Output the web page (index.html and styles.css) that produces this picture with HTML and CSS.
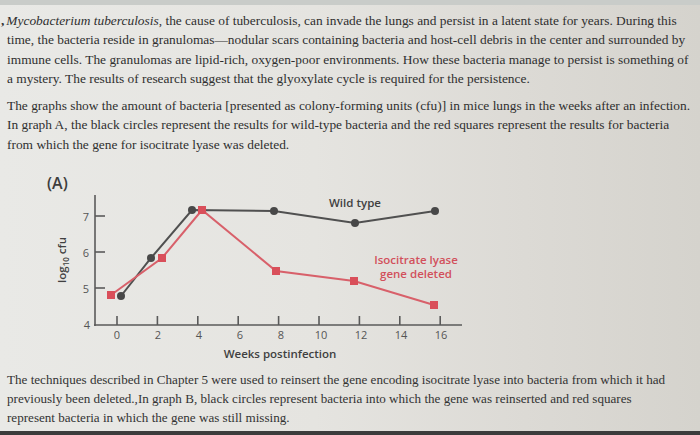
FILE: index.html
```html
<!DOCTYPE html>
<html>
<head>
<meta charset="utf-8">
<link rel="stylesheet" href="styles.css">
</head>
<body>
<div class="topbar"></div>
<main class="page">
  <p class="para intro">
    <span class="ln"><span class="blob">,</span><i>Mycobacterium tuberculosis</i>, the cause of tuberculosis, can invade the lungs and persist in a latent state for years. During this</span>
    <span class="ln">time, the bacteria reside in granulomas—nodular scars containing bacteria and host-cell debris in the center and surrounded by</span>
    <span class="ln">immune cells. The granulomas are lipid-rich, oxygen-poor environments. How these bacteria manage to persist is something of</span>
    <span class="ln">a mystery. The results of research suggest that the glyoxylate cycle is required for the persistence.</span>
  </p>
  <p class="para graphs">
    <span class="ln">The graphs show the amount of bacteria [presented as colony-forming units (cfu)] in mice lungs in the weeks after an infection.</span>
    <span class="ln">In graph A, the black circles represent the results for wild-type bacteria and the red squares represent the results for bacteria</span>
    <span class="ln">from which the gene for isocitrate lyase was deleted.</span>
  </p>
  <svg class="chart" width="700" height="216" viewBox="0 0 700 216">
    <text class="panel" x="47" y="35">(A)</text>
    <g class="axis">
      <line x1="95" y1="41" x2="95" y2="172"/>
      <line x1="94" y1="171" x2="462" y2="171"/>
      <line x1="95" y1="62" x2="105" y2="62"/>
      <line x1="95" y1="98" x2="105" y2="98"/>
      <line x1="95" y1="134" x2="105" y2="134"/>
      <line x1="117" y1="162" x2="117" y2="171"/>
      <line x1="157.4" y1="162" x2="157.4" y2="171"/>
      <line x1="197.8" y1="162" x2="197.8" y2="171"/>
      <line x1="238.2" y1="162" x2="238.2" y2="171"/>
      <line x1="278.6" y1="162" x2="278.6" y2="171"/>
      <line x1="319" y1="162" x2="319" y2="171"/>
      <line x1="359.4" y1="162" x2="359.4" y2="171"/>
      <line x1="399.8" y1="162" x2="399.8" y2="171"/>
      <line x1="440.2" y1="162" x2="440.2" y2="171"/>
    </g>
    <g class="ticklbl">
      <text x="86" y="67" text-anchor="middle">7</text>
      <text x="86" y="103" text-anchor="middle">6</text>
      <text x="86" y="139" text-anchor="middle">5</text>
      <text x="87" y="175" text-anchor="middle">4</text>
      <text x="117" y="185" text-anchor="middle">0</text>
      <text x="158" y="185" text-anchor="middle">2</text>
      <text x="199" y="185" text-anchor="middle">4</text>
      <text x="240" y="185" text-anchor="middle">6</text>
      <text x="281" y="185" text-anchor="middle">8</text>
      <text x="321" y="185" text-anchor="middle">10</text>
      <text x="361" y="185" text-anchor="middle">12</text>
      <text x="401" y="185" text-anchor="middle">14</text>
      <text x="441" y="185" text-anchor="middle">16</text>
    </g>
    <text class="axlbl" x="280" y="204" text-anchor="middle">Weeks postinfection</text>
    <text class="axlbl" transform="translate(66 106) rotate(-90)" text-anchor="middle">log<tspan class="sub" dy="3">10</tspan><tspan dy="-3"> cfu</tspan></text>
    <polyline class="wt" points="121,142 151,104 192,56 274,57 355,69 435,57"/>
    <polyline class="ko" points="111,141 162,104 202,56 276,117 354,127 434,151"/>
    <g class="dots">
      <circle cx="121" cy="142" r="4"/>
      <circle cx="151" cy="104" r="4"/>
      <circle cx="192" cy="56" r="4"/>
      <circle cx="274" cy="57" r="4"/>
      <circle cx="355" cy="69" r="4"/>
      <circle cx="435" cy="57" r="4"/>
    </g>
    <g class="sqs">
      <rect x="107" y="137" width="8" height="8"/>
      <rect x="158" y="100" width="8" height="8"/>
      <rect x="198" y="52" width="8" height="8"/>
      <rect x="272" y="113" width="8" height="8"/>
      <rect x="350" y="123" width="8" height="8"/>
      <rect x="430" y="147" width="8" height="8"/>
    </g>
    <text class="wtlbl" x="329" y="53">Wild type</text>
    <text class="kolbl" x="416" y="110" text-anchor="middle">Isocitrate lyase</text>
    <text class="kolbl" x="416" y="124" text-anchor="middle">gene deleted</text>
  </svg>
  <p class="para outro">
    <span class="ln">The techniques described in Chapter 5 were used to reinsert the gene encoding isocitrate lyase into bacteria from which it had</span>
    <span class="ln">previously been deleted.,In graph B, black circles represent bacteria into which the gene was reinserted and red squares</span>
    <span class="ln">represent bacteria in which the gene was still missing.</span>
  </p>
</main>
<div class="bottombar"></div>
</body>
</html>
```

FILE: styles.css
```css
html, body {
  margin: 0;
  padding: 0;
}
body {
  width: 700px;
  height: 435px;
  overflow: hidden;
  display: flex;
  flex-direction: column;
  background: linear-gradient(90deg, #e9e9e6 0%, #e5e4e0 45%, #dcdad5 75%, #d5d3cd 100%);
  color: #2f2f2f;
  font-family: "Liberation Serif", "Times New Roman", serif;
}
.topbar {
  height: 5px;
  background: #c9ccc9;
  flex: none;
}
.page {
  flex: 1;
  padding: 6px 0 0 7px;
}
.para {
  margin: 0;
  font-size: 13.4px;
  line-height: 19.3px;
}
.ln {
  display: block;
  white-space: nowrap;
}
.blob {
  margin-left: -6px;
  margin-right: 2px;
  font-weight: bold;
}
.graphs {
  margin-top: 8px;
}
.chart {
  display: block;
  margin-left: -7px;
  font-family: "Open Sans", "Noto Sans", sans-serif;
}
.outro {
  font-size: 13.1px;
  line-height: 19px;
  color: #333;
}
.bottombar {
  height: 4px;
  background: #3c3c3c;
  flex: none;
}
.panel {
  font-size: 16px;
  font-weight: 600;
  fill: #3d3d3d;
}
.axis line {
  stroke: #5a5a5a;
  stroke-width: 1.6;
}
.ticklbl text {
  font-size: 11px;
  fill: #555;
}
.axlbl {
  font-size: 11.5px;
  font-weight: 600;
  fill: #404040;
}
.sub {
  font-size: 8px;
}
.wt {
  fill: none;
  stroke: #505050;
  stroke-width: 2;
}
.ko {
  fill: none;
  stroke: #d8606a;
  stroke-width: 2;
}
.dots circle {
  fill: #484848;
}
.sqs rect {
  fill: #d94f5a;
}
.wtlbl {
  font-size: 11.5px;
  font-weight: 600;
  fill: #3f3f3f;
}
.kolbl {
  font-size: 11.5px;
  font-weight: 600;
  fill: #d2505b;
}
```
